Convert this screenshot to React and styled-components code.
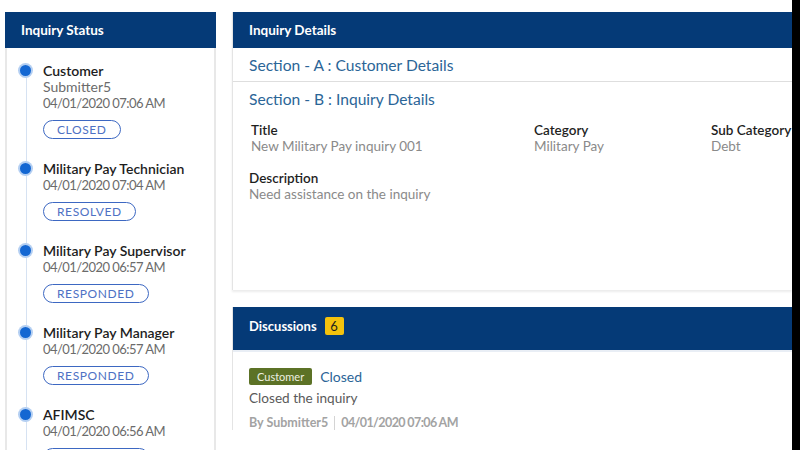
import React from "react";
import styled, { createGlobalStyle } from "styled-components";

const GlobalStyle = createGlobalStyle`
  html, body {
    margin: 0;
    padding: 0;
    background: #ffffff;
    font-family: Lato, "Open Sans", sans-serif;
    overflow: hidden;
  }
`;

const statusItems = [
  { name: "Customer", sub: "Submitter5", date: "04/01/2020 07:06 AM", status: "CLOSED" },
  { name: "Military Pay Technician", date: "04/01/2020 07:04 AM", status: "RESOLVED" },
  { name: "Military Pay Supervisor", date: "04/01/2020 06:57 AM", status: "RESPONDED" },
  { name: "Military Pay Manager", date: "04/01/2020 06:57 AM", status: "RESPONDED" },
  { name: "AFIMSC", date: "04/01/2020 06:56 AM", status: "RESPONDED" },
];

const App = () => {
  return (
    <Screen>
      <GlobalStyle />
      <Page>
        <StatusPanel>
          <PanelHeader>Inquiry Status</PanelHeader>
          <Timeline>
            {statusItems.map((item) => (
              <TimelineItem key={item.name}>
                <Dot />
                <ItemName>{item.name}</ItemName>
                {item.sub && <ItemText>{item.sub}</ItemText>}
                <ItemDate>{item.date}</ItemDate>
                <StatusBadge>{item.status}</StatusBadge>
              </TimelineItem>
            ))}
          </Timeline>
        </StatusPanel>

        <MainColumn>
          <DetailsPanel>
            <PanelHeader>Inquiry Details</PanelHeader>
            <SectionRow>Section - A : Customer Details</SectionRow>
            <SectionBody>
              <SectionTitle>Section - B : Inquiry Details</SectionTitle>
              <FieldGrid>
                <Field>
                  <FieldLabel>Title</FieldLabel>
                  <FieldValue>New Military Pay inquiry 001</FieldValue>
                </Field>
                <Field>
                  <FieldLabel>Category</FieldLabel>
                  <FieldValue>Military Pay</FieldValue>
                </Field>
                <Field>
                  <FieldLabel>Sub Category</FieldLabel>
                  <FieldValue>Debt</FieldValue>
                </Field>
              </FieldGrid>
              <Field $flush>
                <FieldLabel>Description</FieldLabel>
                <FieldValue>Need assistance on the inquiry</FieldValue>
              </Field>
            </SectionBody>
          </DetailsPanel>

          <DiscussionPanel>
            <DiscussionHeader>
              Discussions
              <CountBadge>6</CountBadge>
            </DiscussionHeader>
            <DiscussionBody>
              <DiscussionTop>
                <RoleTag>Customer</RoleTag>
                <DiscussionStatus>Closed</DiscussionStatus>
              </DiscussionTop>
              <DiscussionText>Closed the inquiry</DiscussionText>
              <DiscussionMeta>
                <span>By Submitter5</span>
                <MetaDivider />
                <MetaDate>04/01/2020 07:06 AM</MetaDate>
              </DiscussionMeta>
            </DiscussionBody>
          </DiscussionPanel>
        </MainColumn>
      </Page>
      <EdgeStrip />
    </Screen>
  );
};

const Screen = styled.div`
  display: flex;
  width: 800px;
  height: 450px;
  overflow: hidden;
`;

const Page = styled.div`
  flex: 0 0 792px;
  width: 792px;
  min-width: 0;
  box-sizing: border-box;
  display: grid;
  grid-template-columns: 211px minmax(0, 1fr);
  column-gap: 16px;
  padding: 12px 0 0 5px;
  align-items: start;
  overflow: hidden;
`;

const EdgeStrip = styled.div`
  flex: 0 0 8px;
  background: #000000;
`;

const PanelHeader = styled.div`
  display: flex;
  align-items: center;
  height: 36px;
  padding: 0 16px;
  background: #053a77;
  color: #ffffff;
  font-size: 13.5px;
  font-weight: 700;
`;

const StatusPanel = styled.div`
  border: 2px solid #e8e8e8;
  border-top: none;
  height: 440px;
  box-sizing: border-box;
  ${PanelHeader} {
    margin: 0 -2px;
  }
`;

const Timeline = styled.div`
  position: relative;
  padding: 15px 0 0 36px;
  &::before {
    content: "";
    position: absolute;
    left: 19px;
    top: 22px;
    bottom: 0;
    width: 1px;
    background: #d6e2f2;
  }
`;

const TimelineItem = styled.div`
  position: relative;
  padding-bottom: 22px;
`;

const Dot = styled.span`
  position: absolute;
  left: -23px;
  top: 2px;
  width: 11px;
  height: 11px;
  border-radius: 50%;
  background: #1467d2;
  box-shadow: 0 0 0 2px #b4cff2;
`;

const ItemName = styled.div`
  font-size: 14px;
  line-height: 16px;
  font-weight: 600;
  color: #1d1d1d;
`;

const ItemText = styled.div`
  font-size: 14px;
  line-height: 16px;
  color: #6b6b6b;
`;

const ItemDate = styled(ItemText)`
  font-size: 13px;
  letter-spacing: -0.55px;
`;

const StatusBadge = styled.div`
  display: inline-block;
  margin-top: 9px;
  padding: 0 13px;
  height: 19px;
  line-height: 17px;
  box-sizing: border-box;
  border: 1.5px solid #3d68c2;
  border-radius: 10px;
  color: #4e71c4;
  font-size: 12px;
  letter-spacing: 0.6px;
`;

const MainColumn = styled.div`
  display: flex;
  flex-direction: column;
  gap: 17px;
  min-width: 0;
`;

const DetailsPanel = styled.div`
  border-left: 1px solid #e4e4e4;
  box-shadow: 0 2px 2px rgba(0, 0, 0, 0.08);
  height: 278px;
`;

const SectionRow = styled.div`
  display: flex;
  align-items: center;
  height: 33px;
  padding: 0 16px;
  border-bottom: 1.5px solid #dedede;
  color: #2b6597;
  font-size: 15.6px;
`;

const SectionBody = styled.div`
  padding: 7px 16px 0;
`;

const SectionTitle = styled.div`
  color: #2b6597;
  font-size: 15.6px;
  line-height: 20px;
`;

const FieldGrid = styled.div`
  display: grid;
  grid-template-columns: 283px 177px 1fr;
  margin-top: 13px;
  padding-left: 2px;
`;

const Field = styled.div`
  margin-top: ${(p) => (p.$flush ? "16px" : "0")};
`;

const FieldLabel = styled.div`
  font-size: 13.5px;
  line-height: 16px;
  font-weight: 600;
  color: #1f1f1f;
  white-space: nowrap;
`;

const FieldValue = styled.div`
  font-size: 13.5px;
  line-height: 16px;
  color: #8a8a8a;
  white-space: nowrap;
`;

const DiscussionPanel = styled.div`
  border-left: 1px solid #e4e4e4;
`;

const DiscussionHeader = styled(PanelHeader)`
  height: 45px;
  gap: 8px;
  font-size: 13px;
  padding-bottom: 6px;
  border-bottom: 2px solid #e9eef5;
  box-sizing: border-box;
`;

const CountBadge = styled.span`
  display: inline-flex;
  align-items: center;
  justify-content: center;
  width: 19px;
  height: 18px;
  border-radius: 2px;
  background: #f4c20d;
  color: #1e1e1e;
  font-size: 13px;
  font-weight: 400;
`;

const DiscussionBody = styled.div`
  padding: 16px 16px 0;
`;

const DiscussionTop = styled.div`
  display: flex;
  align-items: center;
  gap: 9px;
`;

const RoleTag = styled.span`
  display: inline-flex;
  align-items: center;
  height: 17px;
  padding: 0 8px;
  border-radius: 2px;
  background: #5c7226;
  color: #eef0e2;
  font-size: 11px;
`;

const DiscussionStatus = styled.span`
  color: #2b6597;
  font-size: 14px;
  margin-left: -1px;
`;

const DiscussionText = styled.div`
  margin-top: 4px;
  font-size: 13.6px;
  line-height: 18px;
  color: #5a5a5a;
`;

const DiscussionMeta = styled.div`
  display: flex;
  align-items: center;
  gap: 6px;
  margin-top: 8px;
  font-size: 12.5px;
  font-weight: 700;
  color: #a3a3a3;
`;

const MetaDate = styled.span`
  letter-spacing: -0.6px;
`;

const MetaDivider = styled.span`
  width: 1px;
  height: 14px;
  background: #d4d4d4;
`;

export default App;
